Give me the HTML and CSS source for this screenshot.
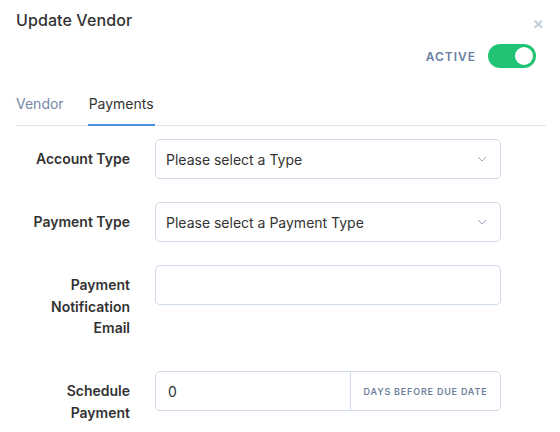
FILE: index.html
```html
<!DOCTYPE html>
<html>
<head>
<meta charset="utf-8">
<link rel="stylesheet" href="styles.css">
</head>
<body>
<div class="modal">
  <div class="header">
    <h1 class="title">Update Vendor</h1>
    <span class="close">&times;</span>
  </div>
  <div class="status-row">
    <span class="status-label">ACTIVE</span>
    <span class="toggle"><span class="knob"></span></span>
  </div>
  <div class="tabs">
    <span class="tab">Vendor</span>
    <span class="tab active">Payments</span>
  </div>
  <div class="form">
    <div class="row">
      <label class="label">Account Type</label>
      <div class="control select">
        <span class="value">Please select a Type</span>
        <svg class="chev" width="10" height="6" viewBox="0 0 10 6"><path d="M1 1l4 4 4-4" fill="none" stroke="#9aa8bd" stroke-width="1"/></svg>
      </div>
    </div>
    <div class="row">
      <label class="label">Payment Type</label>
      <div class="control select">
        <span class="value">Please select a Payment Type</span>
        <svg class="chev" width="10" height="6" viewBox="0 0 10 6"><path d="M1 1l4 4 4-4" fill="none" stroke="#9aa8bd" stroke-width="1"/></svg>
      </div>
    </div>
    <div class="row">
      <label class="label tall">Payment<br>Notification<br>Email</label>
      <div class="control"></div>
    </div>
    <div class="row">
      <label class="label">Schedule<br>Payment</label>
      <div class="control group">
        <span class="value num">0</span>
        <span class="addon">DAYS BEFORE DUE DATE</span>
      </div>
    </div>
  </div>
</div>
</body>
</html>
```
FILE: styles.css
```css
* { box-sizing: border-box; }
body {
  margin: 0;
  background: #fff;
  font-family: "Inter", "Lato", sans-serif;
  color: #333;
}
.modal {
  padding: 9px 14px 0 16px;
  width: 560px;
}
.header {
  display: flex;
  justify-content: space-between;
  align-items: center;
  height: 22px;
}
.title {
  margin: 0;
  font-size: 16px;
  font-weight: 500;
  color: #333;
  letter-spacing: 0.1px;
}
.close {
  color: #c5ccd6;
  font-size: 17px;
  font-weight: 600;
  line-height: 16px;
  margin-top: 6px;
  margin-right: 2px;
}
.status-row {
  display: flex;
  justify-content: flex-end;
  align-items: center;
  gap: 12px;
  margin-top: 13px;
  padding-right: 10px;
}
.status-label {
  font-size: 12px;
  font-weight: 600;
  letter-spacing: 1px;
  color: #6a7ea3;
}
.toggle {
  width: 48px;
  height: 24px;
  border-radius: 12px;
  background: #21c474;
  position: relative;
  display: inline-block;
}
.knob {
  position: absolute;
  right: 3px;
  top: 3px;
  width: 18px;
  height: 18px;
  border-radius: 50%;
  background: #fff;
}
.tabs {
  display: flex;
  gap: 24px;
  margin-top: 27px;
  border-bottom: 1px solid #dfe5ee;
}
.tab {
  font-size: 14px;
  color: #7588a8;
  padding: 0 0 13px;
}
.tab.active {
  color: #333;
  border-bottom: 2px solid #4a8fe0;
  margin-bottom: -1px;
  padding: 0 1px 11px;
}
.form {
  margin-top: 13px;
  display: flex;
  flex-direction: column;
  gap: 23px;
}
.row {
  display: grid;
  grid-template-columns: 114px 346px;
  column-gap: 25px;
  align-items: start;
}
.label {
  text-align: right;
  font-size: 14px;
  font-weight: 600;
  line-height: 21.5px;
  padding-top: 9px;
  color: #333;
}
.label.tall {
  padding-bottom: 9.5px;
}
.control {
  height: 40px;
  border: 1px solid #cfdbe9;
  border-radius: 5px;
  display: flex;
  align-items: center;
  background: #fff;
}
.select {
  justify-content: space-between;
  padding: 0 13px 0 10px;
}
.value {
  font-size: 14px;
  color: #333;
}
.group .num {
  flex: 1;
  padding-left: 12px;
}
.addon {
  width: 150px;
  height: 100%;
  border-left: 1px solid #cfdbe9;
  display: flex;
  align-items: center;
  justify-content: center;
  font-size: 9px;
  font-weight: 600;
  letter-spacing: 0.8px;
  color: #6f7f9e;
}
```
